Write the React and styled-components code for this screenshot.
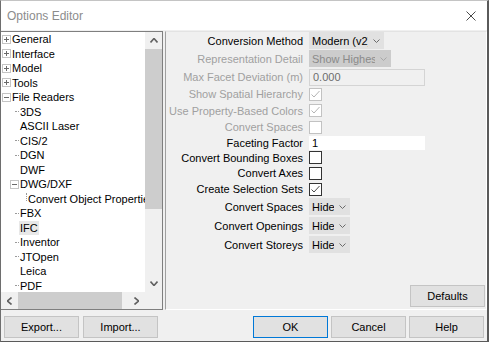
import React from 'react';
import styled, { createGlobalStyle } from 'styled-components';

const GlobalStyle = createGlobalStyle`
  html, body {
    margin: 0;
    padding: 0;
    background: #fff;
  }
  body {
    font-family: "Liberation Sans", Arial, sans-serif;
    font-size: 11px;
    color: #000;
  }
  * {
    box-sizing: border-box;
  }
`;

const treeItems = [
  { label: 'General', level: 0, mark: 'plus' },
  { label: 'Interface', level: 0, mark: 'plus' },
  { label: 'Model', level: 0, mark: 'plus' },
  { label: 'Tools', level: 0, mark: 'plus' },
  { label: 'File Readers', level: 0, mark: 'minus' },
  { label: '3DS', level: 1, mark: 'dash' },
  { label: 'ASCII Laser', level: 1 },
  { label: 'CIS/2', level: 1, mark: 'dash' },
  { label: 'DGN', level: 1, mark: 'dash' },
  { label: 'DWF', level: 1 },
  { label: 'DWG/DXF', level: 1, mark: 'minus' },
  { label: 'Convert Object Properties', level: 2, mark: 'tick' },
  { label: 'FBX', level: 1, mark: 'dash' },
  { label: 'IFC', level: 1, selected: true },
  { label: 'Inventor', level: 1, mark: 'dash' },
  { label: 'JTOpen', level: 1, mark: 'dash' },
  { label: 'Leica', level: 1 },
  { label: 'PDF', level: 1, mark: 'dash' },
];

const Chevron = ({ dir = 'down', color = '#555', w = 7, h = 4, sw = 1 }) => {
  const pts = {
    down: `0.5,0.5 ${w / 2},${h - 0.5} ${w - 0.5},0.5`,
    up: `0.5,${h - 0.5} ${w / 2},0.5 ${w - 0.5},${h - 0.5}`,
    left: `${w - 0.5},0.5 0.5,${h / 2} ${w - 0.5},${h - 0.5}`,
    right: `0.5,0.5 ${w - 0.5},${h / 2} 0.5,${h - 0.5}`,
  }[dir];
  return (
    <svg width={w} height={h} viewBox={`0 0 ${w} ${h}`}>
      <polyline points={pts} fill="none" stroke={color} strokeWidth={sw} />
    </svg>
  );
};

const Expander = ({ open }) => (
  <ExpBox>
    <svg width="9" height="9" viewBox="0 0 9 9">
      <rect x="0.5" y="0.5" width="8" height="8" fill="#fff" stroke="#c4c4c4" />
      <line x1="2" y1="4.5" x2="7" y2="4.5" stroke="#6a6a6a" />
      {!open && <line x1="4.5" y1="2" x2="4.5" y2="7" stroke="#6a6a6a" />}
    </svg>
  </ExpBox>
);

const TreeMark = ({ mark }) => {
  if (mark === 'plus') return <Expander />;
  if (mark === 'minus') return <Expander open />;
  if (mark === 'dash') return <Dash />;
  if (mark === 'tick') return <Tick />;
  return null;
};

const Select = ({ value, width, disabled }) => (
  <SelectBox $width={width} $disabled={disabled}>
    <SelectText>{value}</SelectText>
    <SelectArrow>
      <Chevron color={disabled ? '#a8a8a8' : '#6a6a6a'} />
    </SelectArrow>
  </SelectBox>
);

const Check = ({ checked, disabled }) => (
  <CheckBox $disabled={disabled}>
    {checked && (
      <svg width="11" height="11" viewBox="0 0 11 11">
        <polyline
          points="1.5,5.5 4,8 9.5,2"
          fill="none"
          stroke={disabled ? '#b4b4b4' : '#4a4a4a'}
          strokeWidth="1"
        />
      </svg>
    )}
  </CheckBox>
);

const Field = ({ value, disabled }) => (
  <InputBox $disabled={disabled}>{value}</InputBox>
);

const formRows = [
  { label: 'Conversion Method', h: 17, control: <Select value="Modern (v2)" width={75} /> },
  { label: 'Representation Detail', h: 19, off: true, control: <Select value="Show Highest" width={82} disabled /> },
  { label: 'Max Facet Deviation (m)', h: 18, off: true, control: <Field value="0.000" disabled /> },
  { label: 'Show Spatial Hierarchy', h: 16, off: true, control: <Check checked disabled /> },
  { label: 'Use Property-Based Colors', h: 17, off: true, control: <Check checked disabled /> },
  { label: 'Convert Spaces', h: 16, off: true, control: <Check disabled /> },
  { label: 'Faceting Factor', h: 15, control: <Field value="1" /> },
  { label: 'Convert Bounding Boxes', h: 15, control: <Check /> },
  { label: 'Convert Axes', h: 16, control: <Check /> },
  { label: 'Create Selection Sets', h: 16, control: <Check checked /> },
  { label: 'Convert Spaces', h: 19, control: <Select value="Hide" width={41} /> },
  { label: 'Convert Openings', h: 19, control: <Select value="Hide" width={41} /> },
  { label: 'Convert Storeys', h: 19, control: <Select value="Hide" width={41} /> },
];

export default function App() {
  return (
    <>
      <GlobalStyle />
      <Window>
        <TitleBar>
          <Title>Options Editor</Title>
          <svg width="10" height="10" viewBox="0 0 10 10">
            <line x1="0.5" y1="0.5" x2="9.5" y2="9.5" stroke="#4a4a4a" />
            <line x1="9.5" y1="0.5" x2="0.5" y2="9.5" stroke="#4a4a4a" />
          </svg>
        </TitleBar>
        <Body>
          <Main>
            <Tree>
              <TreeList>
                {treeItems.map((item, i) => (
                  <TreeRow key={i} $level={item.level}>
                    <Marker $level={item.level}>
                      <TreeMark mark={item.mark} />
                    </Marker>
                    <TreeLabel $selected={item.selected}>{item.label}</TreeLabel>
                  </TreeRow>
                ))}
              </TreeList>
              <VScroll>
                <ScrollBtn>
                  <Chevron dir="up" color="#606060" w={8} h={5} sw={1.6} />
                </ScrollBtn>
                <VTrack>
                  <VThumb />
                </VTrack>
                <ScrollBtn>
                  <Chevron dir="down" color="#606060" w={8} h={5} sw={1.6} />
                </ScrollBtn>
              </VScroll>
              <HScroll>
                <ScrollBtn>
                  <Chevron dir="left" color="#606060" w={5} h={8} sw={1.6} />
                </ScrollBtn>
                <HTrack>
                  <HThumb />
                </HTrack>
                <ScrollBtn>
                  <Chevron dir="right" color="#606060" w={5} h={8} sw={1.6} />
                </ScrollBtn>
              </HScroll>
              <Corner />
            </Tree>
            <Panel>
              <Form>
                {formRows.map((row, i) => (
                  <FormRow key={i} $h={row.h}>
                    <Label $off={row.off}>{row.label}</Label>
                    {row.control}
                  </FormRow>
                ))}
              </Form>
              <PanelFooter>
                <Button>Defaults</Button>
              </PanelFooter>
            </Panel>
          </Main>
          <Footer>
            <Button>Export...</Button>
            <Button>Import...</Button>
            <Spacer />
            <Button $primary>OK</Button>
            <Button>Cancel</Button>
            <Button>Help</Button>
          </Footer>
        </Body>
      </Window>
    </>
  );
}

const Window = styled.div`
  width: 489px;
  height: 342px;
  display: flex;
  flex-direction: column;
  border-top: 1px solid #c4c4c4;
  border-left: 1px solid #6e6e6e;
  border-right: 2px solid #5a5a5a;
  border-bottom: 1px solid #5a5a5a;
  background: #f0f0f0;
  overflow: hidden;
`;

const TitleBar = styled.div`
  height: 29px;
  flex: none;
  background: #fff;
  display: flex;
  align-items: center;
  justify-content: space-between;
  padding: 0 11px 0 6px;
`;

const Title = styled.span`
  font-size: 12px;
  color: #8c8c8c;
`;

const Body = styled.div`
  flex: 1;
  display: flex;
  flex-direction: column;
  background: #f0f0f0;
`;

const Main = styled.div`
  height: 280px;
  display: flex;
  gap: 2px;
  padding-top: 1px;
`;

const Tree = styled.div`
  width: 162px;
  height: 279px;
  flex: none;
  background: #fff;
  border: 1px solid #7f7f7f;
  border-left: none;
  display: grid;
  grid-template-columns: 1fr 17px;
  grid-template-rows: 1fr 17px;
  overflow: hidden;
`;

const TreeList = styled.div`
  overflow: hidden;
  white-space: nowrap;
`;

const TreeRow = styled.div`
  height: 14.5px;
  display: flex;
  align-items: center;
  padding-left: ${(p) => p.$level * 8 + 1}px;
`;

const Marker = styled.span`
  width: 10px;
  height: 100%;
  flex: none;
  display: flex;
  align-items: center;
  justify-content: ${(p) => (p.$level === 0 ? 'flex-start' : 'flex-end')};
  position: relative;
`;

const ExpBox = styled.span`
  display: flex;
  margin-right: ${(p) => (p.$level === 0 ? 0 : 1)}px;
`;

const Dash = styled.span`
  width: 4px;
  margin-right: 1px;
  border-top: 1px dotted #9a9a9a;
`;

const Tick = styled.span`
  align-self: flex-start;
  height: 8px;
  margin-right: 1px;
  margin-top: 1px;
  border-left: 1px dotted #9a9a9a;
`;

const TreeLabel = styled.span`
  color: #000;
  padding: 0 1px;
  margin-left: -1px;
  line-height: 14px;
  background: ${(p) => (p.$selected ? '#e8e8e8' : 'transparent')};
`;

const VScroll = styled.div`
  display: flex;
  flex-direction: column;
  background: #f0f0f0;
`;

const HScroll = styled.div`
  display: flex;
  background: #f0f0f0;
`;

const ScrollBtn = styled.div`
  width: 17px;
  height: 17px;
  flex: none;
  display: flex;
  align-items: center;
  justify-content: center;
`;

const VTrack = styled.div`
  flex: 1;
`;

const VThumb = styled.div`
  height: 160px;
  background: #cdcdcd;
`;

const HTrack = styled.div`
  flex: 1;
  display: flex;
  align-items: stretch;
`;

const HThumb = styled.div`
  width: 104px;
  background: #cdcdcd;
`;

const Corner = styled.div`
  background: #f0f0f0;
`;

const Panel = styled.div`
  flex: 1;
  display: flex;
  flex-direction: column;
  border-left: 1px solid #a0a0a0;
  border-top: 1px solid #e3e3e3;
  border-right: 1px solid #fff;
  border-bottom: 1px solid #fff;
`;

const Form = styled.div`
  display: flex;
  flex-direction: column;
`;

const FormRow = styled.div`
  height: ${(p) => p.$h}px;
  display: flex;
  align-items: center;
`;

const Label = styled.span`
  width: 137px;
  flex: none;
  margin-right: 6px;
  text-align: right;
  white-space: nowrap;
  color: ${(p) => (p.$off ? '#a0a0a0' : '#000')};
`;

const SelectBox = styled.div`
  width: ${(p) => p.$width}px;
  height: 17px;
  display: flex;
  align-items: center;
  padding-left: 3px;
  background: ${(p) => (p.$disabled ? '#cccccc' : '#e1e1e1')};
  color: ${(p) => (p.$disabled ? '#8a8a8a' : '#000')};
`;

const SelectText = styled.span`
  flex: 1;
  min-width: 0;
  overflow: hidden;
  white-space: nowrap;
`;

const SelectArrow = styled.span`
  display: flex;
  margin: 0 4px 0 5px;
`;

const CheckBox = styled.span`
  width: 13px;
  height: 13px;
  display: flex;
  align-items: center;
  justify-content: center;
  background: #fff;
  border: 1px solid ${(p) => (p.$disabled ? '#c2c2c2' : '#333')};
`;

const InputBox = styled.div`
  width: 116px;
  height: ${(p) => (p.$disabled ? 17 : 14)}px;
  display: flex;
  align-items: center;
  padding-left: 3px;
  background: ${(p) => (p.$disabled ? '#f0f0f0' : '#fff')};
  border: ${(p) => (p.$disabled ? '1px solid #d4d4d4' : 'none')};
  color: ${(p) => (p.$disabled ? '#6d6d6d' : '#000')};
`;

const PanelFooter = styled.div`
  margin-top: auto;
  display: flex;
  justify-content: flex-end;
  padding: 0 1px 2px 0;
`;

const Button = styled.div`
  width: 75px;
  height: 22px;
  display: flex;
  align-items: center;
  justify-content: center;
  background: #e1e1e1;
  border: 1px solid ${(p) => (p.$primary ? '#0078d7' : '#c4c4c4')};
  color: #000;
`;

const Footer = styled.div`
  flex: 1;
  display: flex;
  align-items: flex-start;
  gap: 3px;
  padding: 6px 3px 0 3px;

  & > :nth-child(2) {
    margin-left: 1px;
  }
`;

const Spacer = styled.div`
  flex: 1;
`;
